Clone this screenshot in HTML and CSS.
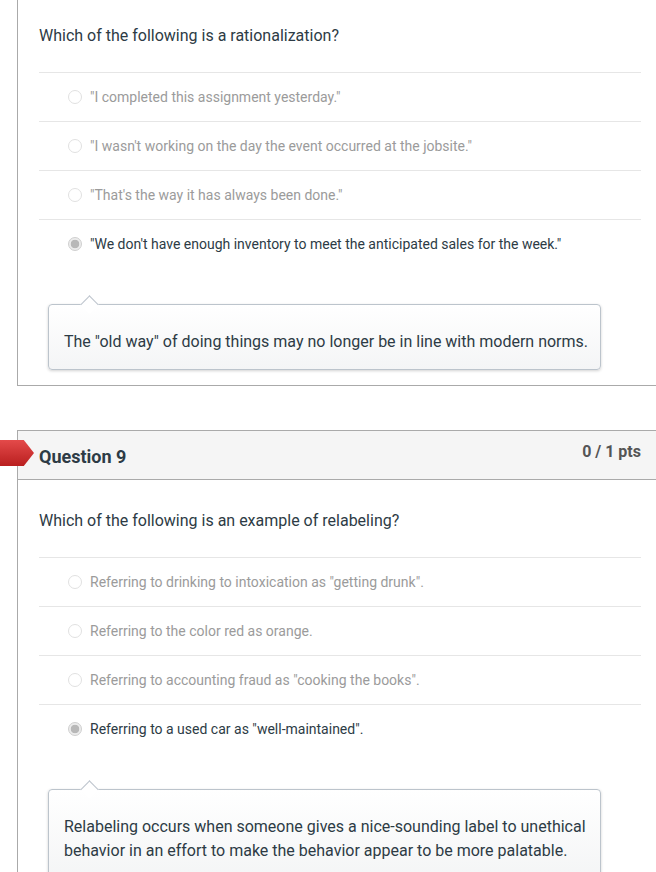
FILE: index.html
```html
<!DOCTYPE html>
<html lang="en">
<head>
<meta charset="utf-8">
<title>Quiz results</title>
<link rel="stylesheet" href="styles.css">
</head>
<body>
<div class="page">
  <div class="question">
    <div class="q-body">
      <p class="q-text">Which of the following is a rationalization?</p>
      <ul class="answers">
        <li class="answer"><span class="radio"></span>"I completed this assignment yesterday."</li>
        <li class="answer"><span class="radio"></span>"I wasn't working on the day the event occurred at the jobsite."</li>
        <li class="answer"><span class="radio"></span>"That's the way it has always been done."</li>
        <li class="answer selected"><span class="radio"></span>"We don't have enough inventory to meet the anticipated sales for the week."</li>
      </ul>
      <div class="comment">
        <p>The "old way" of doing things may no longer be in line with modern norms.</p>
      </div>
    </div>
  </div>

  <div class="question">
    <div class="q-header">
      <span class="flag"></span>
      <h2 class="q-title">Question 9</h2>
      <span class="q-pts">0 / 1 pts</span>
    </div>
    <div class="q-body">
      <p class="q-text">Which of the following is an example of relabeling?</p>
      <ul class="answers">
        <li class="answer"><span class="radio"></span>Referring to drinking to intoxication as "getting drunk".</li>
        <li class="answer"><span class="radio"></span>Referring to the color red as orange.</li>
        <li class="answer"><span class="radio"></span>Referring to accounting fraud as "cooking the books".</li>
        <li class="answer selected"><span class="radio"></span>Referring to a used car as "well-maintained".</li>
      </ul>
      <div class="comment">
        <p>Relabeling occurs when someone gives a nice-sounding label to unethical behavior in an effort to make the behavior appear to be more palatable.</p>
      </div>
    </div>
  </div>
</div>
</body>
</html>
```

FILE: styles.css
```css
html, body {
  margin: 0;
  padding: 0;
  background: #ffffff;
  overflow: hidden;
}

body {
  font-family: Roboto, "Liberation Sans", Arial, sans-serif;
  color: #2d3b45;
}

.page {
  padding-left: 17px;
  margin-top: -6px;
  width: 700px;
}

.question {
  width: 644px;
  border: 1px solid #aaaaaa;
  margin-bottom: 44px;
}

.q-header {
  position: relative;
  height: 48px;
  background: #f5f5f5;
  border-bottom: 1px solid #aaaaaa;
  display: flex;
  justify-content: space-between;
  align-items: flex-start;
  padding: 0 21px;
}

.q-title {
  margin: 0;
  padding-top: 15px;
  font-size: 18px;
  line-height: 22px;
  font-weight: 700;
  color: #2d3b45;
}

.q-pts {
  padding-top: 11px;
  font-size: 16px;
  line-height: 20px;
  font-weight: 700;
  color: #555555;
}

.flag {
  position: absolute;
  left: -18px;
  top: 9px;
  width: 34px;
  height: 26px;
  background: linear-gradient(#e44a4a, #b91f1f);
  clip-path: polygon(0 0, 70% 0, 100% 50%, 70% 100%, 0 100%);
}

.q-body {
  padding: 29px 21px 15px;
}

.q-text {
  margin: 0 0 24px;
  font-size: 16px;
  line-height: 24px;
}

.answers {
  list-style: none;
  margin: 0;
  padding: 0;
}

.answer {
  display: flex;
  align-items: center;
  height: 48px;
  border-top: 1px solid #e6e6e6;
  padding-left: 29px;
  font-size: 14px;
  color: #9b9b9b;
}

.answer.selected {
  color: #2d3b45;
}

.radio {
  box-sizing: border-box;
  width: 14px;
  height: 14px;
  border-radius: 50%;
  border: 1px solid #e1e1e1;
  background: #ffffff;
  margin-right: 8px;
  flex: none;
}

.answer.selected .radio {
  border: 1px solid #cfcfcf;
  background: radial-gradient(circle, #b8b8b8 0, #b8b8b8 4px, #ececec 4.6px);
}

.comment {
  position: relative;
  margin: 36px 40px 0 9px;
  border: 1px solid #bcc4cc;
  border-radius: 4px;
  background: linear-gradient(#ffffff, #f4f5f6);
  box-shadow: 0 1px 3px rgba(0, 0, 0, 0.18);
  padding: 25px 6px 15px 15px;
}

.comment::before {
  content: "";
  position: absolute;
  left: 34px;
  top: -7px;
  width: 12px;
  height: 12px;
  background: #ffffff;
  border-left: 1px solid #bcc4cc;
  border-top: 1px solid #bcc4cc;
  transform: rotate(45deg);
}

.comment p {
  margin: 0;
  font-size: 16px;
  line-height: 24px;
  color: #2d3b45;
}
```
